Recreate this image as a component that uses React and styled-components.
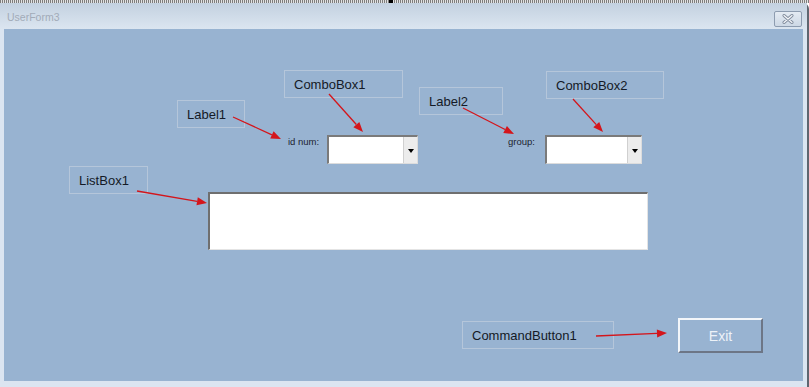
import React from "react";
import styled, { createGlobalStyle } from "styled-components";

const Global = createGlobalStyle`
  html, body { margin: 0; padding: 0; background: #ffffff; }
  body { font-family: "Liberation Sans", Arial, sans-serif; }
`;

const Screen = styled.div`
  width: 809px;
  height: 387px;
  display: flex;
  flex-direction: column;
  overflow: hidden;
`;

const DottedStrip = styled.div`
  height: 3px;
  flex: none;
  background: repeating-linear-gradient(90deg, #7d7d7d 0 1px, #e2e2e2 1px 2px);
  position: relative;
`;

const Mark = styled.span`
  position: absolute;
  left: 389px;
  top: 0;
  width: 4px;
  height: 3px;
  background: #000;
`;

const Window = styled.div`
  flex: 1;
  display: flex;
  flex-direction: column;
  background: #dbe5f1;
  border-right: 2px solid #5f6670;
  border-top-right-radius: 6px;
`;

const TitleBar = styled.div`
  height: 26px;
  flex: none;
  display: flex;
  align-items: center;
  justify-content: space-between;
  padding: 0 5px 0 7px;
  background: linear-gradient(#c3d1e0, #dbe5f0);
`;

const Title = styled.span`
  font-size: 10.5px;
  color: #a2abb8;
  padding-top: 2px;
`;

const CloseButton = styled.div`
  width: 26px;
  height: 14px;
  border: 1px solid #8d9cb0;
  border-radius: 2px;
  background: linear-gradient(#e4ebf3, #cdd8e5);
  display: flex;
  align-items: center;
  justify-content: center;
  margin-top: 5px;
`;

const Client = styled.div`
  position: relative;
  height: 352px;
  margin: 0 4px 6px 4px;
  background: #98b3d1;
  flex: none;
`;

const Note = styled.div`
  position: absolute;
  box-sizing: border-box;
  height: 28px;
  border: 1px solid #b5c6da;
  display: flex;
  align-items: center;
  padding-left: 9px;
  font-size: 13px;
  color: #141a26;
`;

const FieldLabel = styled.span`
  position: absolute;
  font-size: 9.5px;
  color: #1c2330;
  line-height: 12px;
`;

const Combo = styled.div`
  position: absolute;
  box-sizing: border-box;
  height: 29px;
  background: #ffffff;
  border-top: 2px solid #7a7a7a;
  border-left: 2px solid #7a7a7a;
  border-right: 1px solid #dcdcdc;
  border-bottom: 1px solid #dcdcdc;
  display: flex;
  justify-content: flex-end;
`;

const DropButton = styled.div`
  width: 13px;
  background: #ececec;
  border-left: 1px solid #d0d0d0;
  display: flex;
  align-items: center;
  justify-content: center;
  padding-top: 2px;
`;

const Triangle = styled.span`
  width: 0;
  height: 0;
  border-left: 3.5px solid transparent;
  border-right: 3.5px solid transparent;
  border-top: 4px solid #000;
`;

const ListBox = styled.div`
  position: absolute;
  box-sizing: border-box;
  background: #ffffff;
  border-top: 2px solid #6f6f6f;
  border-left: 2px solid #6f6f6f;
  border-right: 1px solid #e4e4e4;
  border-bottom: 1px solid #e4e4e4;
`;

const ExitButton = styled.div`
  position: absolute;
  box-sizing: border-box;
  background: #98b3d1;
  border-top: 2px solid #f3f6fa;
  border-left: 2px solid #f3f6fa;
  border-right: 2px solid #6d7686;
  border-bottom: 2px solid #6d7686;
  display: flex;
  align-items: center;
  justify-content: center;
  font-size: 14px;
  color: #edf2f8;
`;

const Overlay = styled.svg`
  position: absolute;
  left: 0;
  top: 0;
  pointer-events: none;
`;

const notes = [
  { text: "ComboBox1", x: 280, y: 41, w: 119 },
  { text: "Label1", x: 173, y: 71, w: 68 },
  { text: "Label2", x: 415, y: 58, w: 84 },
  { text: "ComboBox2", x: 542, y: 42, w: 118 },
  { text: "ListBox1", x: 65, y: 137, w: 79 },
  { text: "CommandButton1", x: 458, y: 292, w: 152 },
];

const arrows = [
  [229, 88, 277, 110],
  [325, 65, 359, 103],
  [459, 79, 510, 105],
  [569, 70, 599, 103],
  [133, 162, 203, 174],
  [592, 307, 663, 304],
];

function Arrow({ x1, y1, x2, y2 }) {
  const ang = Math.atan2(y2 - y1, x2 - x1);
  const len = 10;
  const half = 4;
  const bx = x2 - len * Math.cos(ang);
  const by = y2 - len * Math.sin(ang);
  const px = -Math.sin(ang) * half;
  const py = Math.cos(ang) * half;
  return (
    <g>
      <line x1={x1} y1={y1} x2={bx} y2={by} stroke="#d4151b" strokeWidth="1.3" />
      <polygon
        points={`${x2},${y2} ${bx + px},${by + py} ${bx - px},${by - py}`}
        fill="#d4151b"
      />
    </g>
  );
}

export default function App() {
  return (
    <Screen>
      <Global />
      <DottedStrip>
        <Mark />
      </DottedStrip>
      <Window>
        <TitleBar>
          <Title>UserForm3</Title>
          <CloseButton>
            <svg width="12" height="10" viewBox="0 0 12 10">
              <path d="M2 1.5 L10 8.5 M10 1.5 L2 8.5" stroke="#7f8b9c" strokeWidth="3" strokeLinecap="round" />
              <path d="M2 1.5 L10 8.5 M10 1.5 L2 8.5" stroke="#f6f8fb" strokeWidth="1.2" strokeLinecap="round" />
            </svg>
          </CloseButton>
        </TitleBar>
        <Client>
          {notes.map((n) => (
            <Note key={n.text} style={{ left: n.x, top: n.y, width: n.w }}>
              {n.text}
            </Note>
          ))}
          <FieldLabel style={{ left: 284, top: 107 }}>id num:</FieldLabel>
          <FieldLabel style={{ left: 504, top: 107 }}>group:</FieldLabel>
          <Combo style={{ left: 323, top: 106, width: 91 }}>
            <DropButton>
              <Triangle />
            </DropButton>
          </Combo>
          <Combo style={{ left: 541, top: 106, width: 97 }}>
            <DropButton>
              <Triangle />
            </DropButton>
          </Combo>
          <ListBox style={{ left: 204, top: 163, width: 440, height: 58 }} />
          <ExitButton style={{ left: 674, top: 289, width: 85, height: 35 }}>Exit</ExitButton>
          <Overlay width="799" height="352">
            {arrows.map((a, i) => (
              <Arrow key={i} x1={a[0]} y1={a[1]} x2={a[2]} y2={a[3]} />
            ))}
          </Overlay>
        </Client>
      </Window>
    </Screen>
  );
}
